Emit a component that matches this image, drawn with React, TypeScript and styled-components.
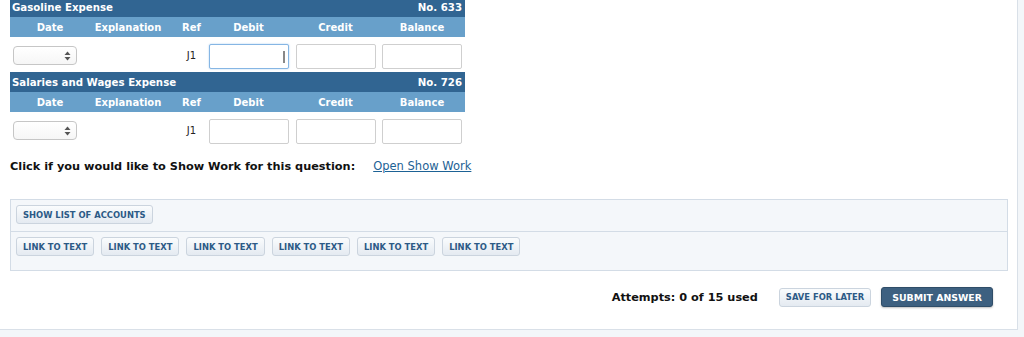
import React from "react";
import styled, { createGlobalStyle } from "styled-components";

const GlobalStyle = createGlobalStyle`
  html, body {
    margin: 0;
    padding: 0;
    background: #f3f6f9;
    font-family: "DejaVu Sans", Verdana, sans-serif;
  }
`;

type Account = {
  name: string;
  number: string;
  focused?: boolean;
};

const accounts: Account[] = [
  { name: "Gasoline Expense", number: "No. 633", focused: true },
  { name: "Salaries and Wages Expense", number: "No. 726" },
];

const columns = ["Date", "Explanation", "Ref", "Debit", "Credit", "Balance"];

const App = () => {
  return (
    <>
      <GlobalStyle />
      <Panel>
        <Content>
          {accounts.map((acc) => (
            <Ledger key={acc.number}>
              <TitleBar>
                <span>{acc.name}</span>
                <span>{acc.number}</span>
              </TitleBar>
              <Grid>
                {columns.map((c) => (
                  <HeadCell key={c} $shift={c === "Explanation"}>
                    {c}
                  </HeadCell>
                ))}
              </Grid>
              <DataRow>
                <Cell>
                  <SelectBox>
                    <svg width="7" height="10" viewBox="0 0 7 10">
                      <path d="M3.5 0.5 L6.5 4 L0.5 4 Z" fill="#555" />
                      <path d="M3.5 9.5 L6.5 6 L0.5 6 Z" fill="#555" />
                    </svg>
                  </SelectBox>
                </Cell>
                <Cell />
                <RefCell>J1</RefCell>
                <Cell>
                  <Field $focused={acc.focused}>
                    {acc.focused && <Caret />}
                  </Field>
                </Cell>
                <Cell>
                  <Field />
                </Cell>
                <Cell>
                  <Field />
                </Cell>
              </DataRow>
            </Ledger>
          ))}

          <ShowWork>
            <strong>Click if you would like to Show Work for this question:</strong>
            <WorkLink href="#">Open Show Work</WorkLink>
          </ShowWork>

          <ToolBox>
            <ToolRow>
              <SmallButton>Show List of Accounts</SmallButton>
            </ToolRow>
            <ToolRow $tall>
              {Array.from({ length: 6 }).map((_, i) => (
                <SmallButton key={i}>Link to Text</SmallButton>
              ))}
            </ToolRow>
          </ToolBox>

          <Footer>
            <Attempts>Attempts: 0 of 15 used</Attempts>
            <SmallButton>Save for Later</SmallButton>
            <SubmitButton>Submit Answer</SubmitButton>
          </Footer>
        </Content>
      </Panel>
    </>
  );
};

const Panel = styled.div`
  width: 1018px;
  height: 330px;
  overflow: hidden;
  background: #fff;
  border-right: 1px solid #d9e0e8;
  border-bottom: 1px solid #d9e0e8;
  box-sizing: border-box;
`;

const Content = styled.div`
  margin-top: -3px;
  padding-left: 10px;
  width: 998px;
`;

const Ledger = styled.div`
  width: 455px;
`;

const TitleBar = styled.div`
  height: 20px;
  background: #316592;
  color: #fff;
  font-size: 10.2px;
  font-weight: bold;
  display: flex;
  align-items: center;
  justify-content: space-between;
  padding: 0 3px 0 2px;
`;

const Grid = styled.div`
  display: grid;
  grid-template-columns: 80px 88px 27px 87px 87px 86px;
  height: 20px;
  background: #68a0ca;
  align-items: center;
`;

const HeadCell = styled.div<{ $shift?: boolean }>`
  color: #fff;
  font-size: 10px;
  font-weight: bold;
  text-align: center;
  padding-right: ${(p) => (p.$shift ? "12px" : "0")};
  white-space: nowrap;
`;

const DataRow = styled.div`
  display: grid;
  grid-template-columns: 80px 88px 27px 87px 87px 86px;
  height: 35px;
  align-items: start;
  padding-top: 7px;
  box-sizing: border-box;
`;

const Cell = styled.div`
  display: flex;
  justify-content: center;
`;

const RefCell = styled.div`
  font-size: 10px;
  color: #222;
  padding-top: 6px;
  text-align: center;
`;

const SelectBox = styled.div`
  width: 64px;
  height: 19px;
  margin-left: -11px;
  margin-top: 2px;
  box-sizing: border-box;
  border: 1px solid #c6c6c6;
  border-radius: 4px;
  background: linear-gradient(#fff, #f6f6f6);
  display: flex;
  align-items: center;
  justify-content: flex-end;
  padding-right: 5px;
`;

const Field = styled.div<{ $focused?: boolean }>`
  position: relative;
  width: 80px;
  height: 25px;
  box-sizing: border-box;
  border: 1px solid ${(p) => (p.$focused ? "#86b6e4" : "#cfcfcf")};
  box-shadow: ${(p) => (p.$focused ? "0 0 2px #a9cdf0" : "none")};
  border-radius: 2px;
  background: #fff;
`;

const Caret = styled.span`
  position: absolute;
  right: 3px;
  top: 6px;
  width: 2px;
  height: 12px;
  background: #888;
`;

const ShowWork = styled.div`
  display: flex;
  align-items: center;
  gap: 18px;
  height: 38px;
  font-size: 11.3px;
  color: #111;
`;

const WorkLink = styled.a`
  color: #1d6295;
  text-decoration: underline;
  font-size: 11.5px;
`;

const ToolBox = styled.div`
  margin-top: 14px;
  width: 998px;
  box-sizing: border-box;
  border: 1px solid #d3dce6;
  background: #f4f7fa;
`;

const ToolRow = styled.div<{ $tall?: boolean }>`
  display: flex;
  gap: 7px;
  padding: 5px 5px;
  height: ${(p) => (p.$tall ? "39px" : "31px")};
  box-sizing: border-box;
  & + & {
    border-top: 1px solid #d3dce6;
  }
`;

const SmallButton = styled.button`
  height: 19px;
  padding: 0 6px;
  border: 1px solid #cbd4de;
  border-radius: 3px;
  background: linear-gradient(#fafcfd, #e4eaf1);
  color: #2c5a86;
  font-family: "DejaVu Sans", sans-serif;
  font-size: 8.4px;
  font-weight: bold;
  text-transform: uppercase;
  white-space: nowrap;
  cursor: pointer;
`;

const Footer = styled.div`
  display: flex;
  align-items: center;
  justify-content: flex-end;
  padding-right: 15px;
  height: 52px;
`;

const Attempts = styled.div`
  font-size: 11.3px;
  font-weight: bold;
  color: #111;
  margin-right: 21px;
`;

const SubmitButton = styled.button`
  margin-left: 10px;
  height: 20px;
  padding: 0 10px;
  border: 1px solid #2f4d68;
  border-radius: 3px;
  background: #3d6080;
  color: #fff;
  font-family: "DejaVu Sans", sans-serif;
  font-size: 9.4px;
  font-weight: bold;
  text-transform: uppercase;
  box-shadow: 0 1px 2px rgba(0, 0, 0, 0.25);
  cursor: pointer;
`;

export default App;
